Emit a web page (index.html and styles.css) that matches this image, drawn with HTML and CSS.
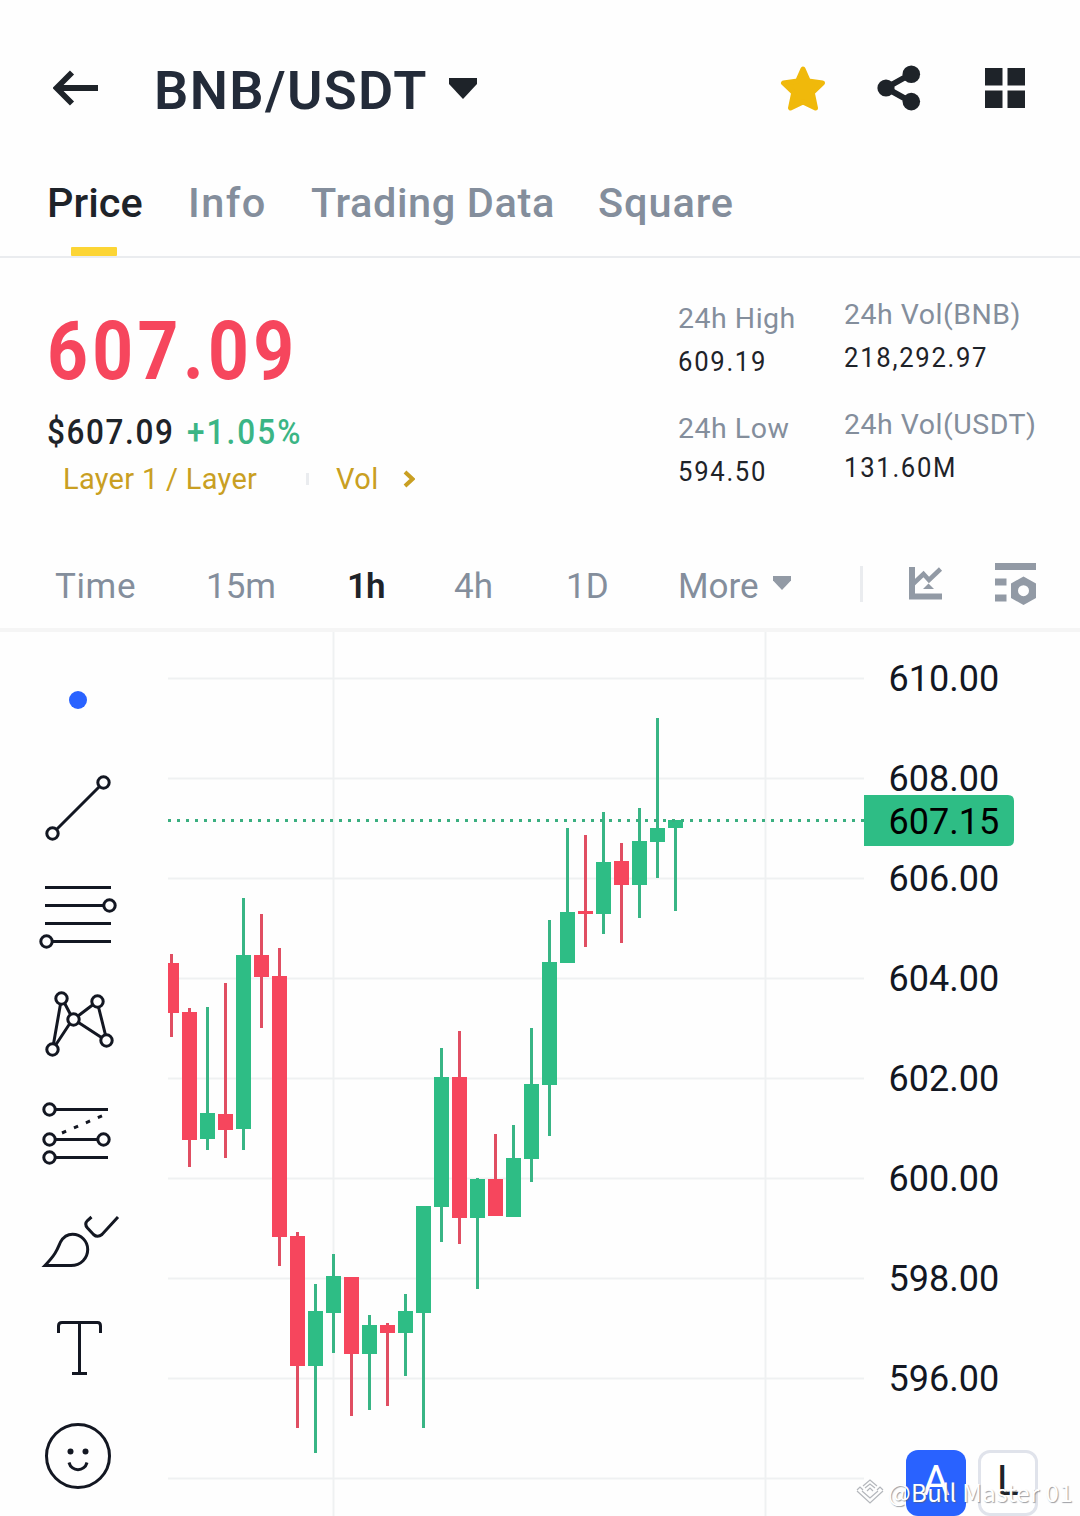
FILE: index.html
```html
<!DOCTYPE html>
<html lang="en">
<head>
  <meta charset="UTF-8" />
  <title>BNB/USDT</title>
  <link rel="stylesheet" href="styles.css">
</head>
<body>
  <header class="header">
    <svg class="back" width="46" height="36" viewBox="0 0 46 36"><path d="M19 2.5L3.500 18L19 33.500M4 18H45" fill="none" stroke="#1e2329" stroke-width="5.800"/></svg>
    <h1>BNB/USDT</h1>
    <svg class="caret" width="28" height="21" viewBox="0 0 28 21"><path d="M0 0H28V6L14 21L0 6Z" fill="#1e2329"/></svg>
    <div class="actions">
      <svg width="46" height="48" viewBox="0 0 46 48"><path d="M23 5L28.300 17L42.500 19L32.300 28.800L35.500 44L23 38L10.500 44L13.700 28.800L3.500 19L17.700 17Z" fill="#f0b90b" stroke="#f0b90b" stroke-width="5" stroke-linejoin="round"/></svg>
      <svg width="44" height="46" viewBox="0 0 44 46"><path d="M34 9L9 23L34 36.800" fill="none" stroke="#1e2329" stroke-width="6"/><g fill="#1e2329"><circle cx="9" cy="23" r="8.600"/><circle cx="34.300" cy="9.200" r="8.800"/><circle cx="34.300" cy="36.600" r="8.800"/></g></svg>
      <svg width="40" height="40" viewBox="0 0 40 40"><path d="M0 0H17.500V17.500H0ZM22.500 0H40V17.500H22.500ZM0 22.500H17.500V40H0ZM22.500 22.500H40V40H22.500Z" fill="#1e2329"/></svg>
    </div>
  </header>

  <nav class="tabs">
    <a class="tab active t-price">Price</a>
    <a class="tab t-info">Info</a>
    <a class="tab t-data">Trading Data</a>
    <a class="tab t-square">Square</a>
  </nav>

  <section class="summary">
    <div class="quote">
      <div class="last">607.09</div>
      <div class="change"><span class="fiat">$607.09</span><span class="pct">+1.05%</span></div>
      <div class="tags">
        <span class="layer">Layer 1 / Layer</span>
        <i class="sep"></i>
        <span class="vol">Vol</span>
        <svg width="12" height="18" viewBox="0 0 12 18"><path d="M2 2L9.500 9L2 16" fill="none" stroke="#c99f22" stroke-width="4"/></svg>
      </div>
    </div>
    <div class="stats first">
      <div class="label">24h High</div>
      <div class="value">609.19</div>
      <div class="label">24h Low</div>
      <div class="value">594.50</div>
    </div>
    <div class="stats second">
      <div class="label">24h Vol(BNB)</div>
      <div class="value">218,292.97</div>
      <div class="label">24h Vol(USDT)</div>
      <div class="value">131.60M</div>
    </div>
  </section>

  <div class="intervals">
    <span class="wide">Time</span>
    <span>15m</span>
    <span class="active">1h</span>
    <span>4h</span>
    <span>1D</span>
    <span class="more">More <svg width="18" height="14" viewBox="0 0 18 14"><path d="M0 0H18V4.500L9 14L0 4.500Z" fill="#929aa5"/></svg></span>
    <i class="sep"></i>
    <svg width="34" height="34" viewBox="0 0 34 34"><path d="M3 0V29.500H33" fill="none" stroke="#929aa5" stroke-width="6"/><path d="M4 17L14.500 7L20 13L31.500 2" fill="none" stroke="#929aa5" stroke-width="4.500"/><path d="M14 22L19.500 16.500L25 22Z" fill="#929aa5"/></svg>
    <svg width="42" height="44" viewBox="0 0 42 44"><path d="M0 1H41V8H0ZM0 16.500H11.500V23.500H0ZM0 32.500H11.500V39.500H0Z" fill="#929aa5"/><path fill-rule="evenodd" d="M28.500 14.500L41 21.500V36L28.500 43L16 36V21.500ZM28.500 23.200A5.500 5.500 0 1 0 28.500 34.200A5.500 5.500 0 1 0 28.500 23.200Z" fill="#929aa5"/></svg>
  </div>

  <main class="board">
    <div class="tools">
      <svg viewBox="0 0 168 108"><circle cx="78" cy="54" r="9" fill="#2962ff" stroke="none"/></svg>
      <svg viewBox="0 0 168 108"><path d="M56.500 75.500L99.500 32.500"/><circle cx="52.500" cy="79.500" r="5.700"/><circle cx="103.500" cy="28.500" r="5.700"/></svg>
      <svg viewBox="0 0 168 108"><path d="M45 25.500H111M45 43.500H104M45 61.500H111M52 79.500H111"/><circle cx="109.500" cy="43.500" r="5.700"/><circle cx="46.500" cy="79.500" r="5.700"/></svg>
      <svg viewBox="0 0 168 108"><path d="M60.500 34L53.500 74M64.500 33L70.500 44.500M69.500 54L56 74.500M78 46L92.500 35M98.500 37L105.500 65M78.500 52.500L101.500 67.500"/><circle cx="61.500" cy="28.500" r="5.700"/><circle cx="97.500" cy="31.500" r="5.700"/><circle cx="73.500" cy="49.500" r="5.700"/><circle cx="52.500" cy="79.500" r="5.700"/><circle cx="106.500" cy="70.500" r="5.700"/></svg>
      <svg viewBox="0 0 168 108"><path d="M55 31.500H108M55 61.500H98M55 79.500H108"/><path d="M62 55L104 37" stroke-dasharray="4.500 8.500"/><circle cx="49.500" cy="31.500" r="5.700"/><circle cx="49.500" cy="61.500" r="5.700"/><circle cx="103.500" cy="61.500" r="5.700"/><circle cx="49.500" cy="79.500" r="5.700"/></svg>
      <svg viewBox="0 0 168 108"><path d="M91.500 31L87.500 34.500Q84 38 87.500 42L93.500 48.500Q97.500 52 102 48.500L118 31M45 79.500C56 68 57 64 60.500 56C64 50 68 48.300 72.500 48.300C81 48.300 87.700 55 87.700 63.500C87.700 72 81 79.500 71 79.500Z"/></svg>
      <svg viewBox="0 0 168 108"><path d="M58.500 39V32Q58.500 28.500 62 28.500H97.500Q100.500 28.500 100.500 32V39M79.500 28.500V79.500M72 79.500H87"/></svg>
      <svg viewBox="0 0 168 108"><circle cx="78" cy="54" r="31.500"/><g fill="#131722" stroke="none"><circle cx="70.500" cy="49.500" r="3"/><circle cx="85.500" cy="49.500" r="3"/></g><path d="M69 60.500C71.500 70 84.500 70 87 60.500"/></svg>
    </div>
    <svg class="chart" id="chart" width="912" height="884" viewBox="168 632 912 884"></svg>
    <div class="scale">
      <span class="auto">A</span>
      <span class="log">L</span>
    </div>
  </main>

  <div class="watermark">
    <svg width="28" height="26" viewBox="0 0 28 26"><g fill="none" stroke="#b4b7bc" stroke-width="1.200"><path d="M7 7L14 1L21 7M9 9L14 5L19 9M1 11L4 8L7 11M21 11L24 8L27 11M11 12L14 9L17 12M1 12L14 24L27 12M6 12L14 19L22 12"/></g></svg>
    <span>@Bull Master 01</span>
  </div>

  <script>
    const chart = document.getElementById("chart");

    // x, high, low, body top, body bottom, up?
    const candles = [
      [171.5, 954, 1037, 963, 1013, 0],
      [189.5, 1008, 1167, 1012, 1140, 0],
      [207.5, 1007, 1150, 1113, 1139, 1],
      [225.5, 983, 1158, 1114, 1130, 0],
      [243.5, 898, 1150, 955, 1129, 1],
      [261.5, 914, 1028, 955, 977, 0],
      [279.5, 948, 1266, 976, 1237, 0],
      [297.5, 1232, 1428, 1236, 1366, 0],
      [315.5, 1284, 1453, 1311, 1366, 1],
      [333.5, 1254, 1353, 1276, 1313, 1],
      [351.5, 1277, 1416, 1277, 1354, 0],
      [369.5, 1315, 1410, 1325, 1354, 1],
      [387.5, 1323, 1406, 1325, 1333, 0],
      [405.5, 1294, 1376, 1311, 1333, 1],
      [423.5, 1206, 1428, 1206, 1313, 1],
      [441.5, 1048, 1242, 1077, 1207, 1],
      [459.5, 1031, 1244, 1077, 1218, 0],
      [477.5, 1178, 1289, 1179, 1218, 1],
      [495.5, 1134, 1216, 1179, 1216, 0],
      [513.5, 1125, 1217, 1158, 1217, 1],
      [531.5, 1028, 1182, 1084, 1159, 1],
      [549.5, 920, 1136, 962, 1085, 1],
      [567.5, 828, 963, 912, 963, 1],
      [585.5, 835, 947, 911, 914, 0],
      [603.5, 812, 934, 862, 914, 1],
      [621.5, 843, 943, 861, 885, 0],
      [639.5, 808, 918, 841, 885, 1],
      [657.5, 718, 878, 828, 842, 1],
      [675.5, 820, 911, 820, 828, 1]
    ];

    let out = "";
    function rect(x, y, w, h, cls) {
      out += `<rect x="${x}" y="${y}" width="${w}" height="${h}" class="${cls}"/>`;
    }

    rect(332.5, 630, 2, 886, "grid");
    rect(764.5, 630, 2, 886, "grid");
    for (let i = 0; i < 9; i++) {
      const y = 678 + i * 100;
      rect(168, y - 0.5, 696, 2, "grid");
      if (i < 8) {
        out += `<text x="888.5" y="${y + 13}" class="tick">${610 - i * 2}.00</text>`;
      }
    }

    candles.forEach(([x, high, low, top, bottom, up]) => {
      const left = Math.max(168, x - 7.5);
      rect(x - 1.5, high, 3, low - high, up ? "wick-up" : "wick-down");
      rect(left, top, x + 7.5 - left, bottom - top, up ? "up" : "down");
    });

    out += '<path d="M168 820.500H864" class="last-line"/>';
    out += '<path d="M864 795H1008Q1014 795 1014 801V840Q1014 846 1008 846H864Z" class="up"/>';
    out += '<text x="888.5" y="834" class="tick now">607.15</text>';
    chart.innerHTML = out;
  </script>
</body>
</html>
```
FILE: styles.css
```css
:root {
  --text: #1e2329;
  --muted: #848e9c;
  --green: #2ebd85;
  --red: #f6465d;
  --gold: #c99f22;
  --line: #eaecef;
}

* {
  box-sizing: border-box;
}

body {
  margin: 0;
  width: 1080px;
  height: 1516px;
  overflow: hidden;
  position: relative;
  background: #fefefe;
  color: var(--text);
  font-family: Roboto, "Liberation Sans", sans-serif;
}

svg {
  display: block;
  flex: none;
}

.header {
  display: flex;
  align-items: flex-start;
  height: 160px;
  padding: 48px 55px 0 53px;
}

.back {
  margin-top: 22px;
}

h1 {
  width: 295px;
  margin: 0 0 0 55px;
  padding-top: 3px;
  font-size: 54px;
  line-height: 80px;
  font-weight: 600;
  letter-spacing: 1.4px;
  color: #232b39;
  white-space: nowrap;
}

.caret {
  margin-top: 30px;
}

.actions {
  display: flex;
  align-items: center;
  height: 80px;
  margin-left: auto;
}

.actions svg:nth-child(2) {
  margin: 0 64px 0 51px;
}

.tabs {
  display: flex;
  gap: 46px;
  height: 98px;
  padding-left: 47px;
  border-bottom: 2px solid var(--line);
}

.tab {
  display: flex;
  flex-direction: column;
  font-size: 41.5px;
  line-height: 85px;
  font-weight: 500;
  color: var(--muted);
  white-space: nowrap;
}

.tab.active {
  color: var(--text);
}

.tab.active::after {
  content: "";
  width: 46px;
  height: 9px;
  margin: 2px 0 0 23.5px;
  border-radius: 1px;
  background: #fcd535;
}

.t-price { width: 95px; }
.t-info { width: 77px; letter-spacing: 1.4px; }
.t-data { width: 241px; letter-spacing: 0.6px; }
.t-square { width: 136px; letter-spacing: 0.9px; }

.summary {
  display: flex;
  height: 282px;
}

.quote {
  width: 678px;
  padding: 42px 0 0 47px;
}

/* figures are set narrow with open tracking */
.last,
.fiat,
.pct,
.value {
  transform-origin: left;
}

.last {
  font-size: 81px;
  line-height: 104px;
  font-weight: 700;
  letter-spacing: 5px;
  color: var(--red);
  transform: scaleX(0.88);
}

.change {
  display: flex;
  font-size: 35px;
  line-height: 58px;
  height: 56px;
  font-weight: 500;
}

.fiat {
  width: 140px;
  letter-spacing: 1.8px;
  transform: scaleX(0.9);
}

.pct {
  color: #3bb585;
  letter-spacing: 2.3px;
  transform: scaleX(0.9);
}

.tags {
  display: flex;
  align-items: center;
  padding-left: 16px;
  font-size: 29px;
  line-height: 38px;
  color: var(--gold);
}

.layer {
  width: 243px;
  letter-spacing: 0.3px;
}

.sep {
  width: 3px;
  background: var(--line);
}

.tags .sep {
  height: 12px;
}

.vol {
  width: 67px;
  margin-left: 27px;
  letter-spacing: 0.4px;
}

.stats {
  font-size: 28.5px;
  line-height: 43px;
  white-space: nowrap;
}

.stats.first {
  width: 166px;
  padding-top: 39px;
}

.stats.second {
  padding-top: 35px;
}

.label {
  color: var(--muted);
  letter-spacing: 0.5px;
}

.value {
  margin-bottom: 24px;
  letter-spacing: 1.9px;
  transform: scaleX(0.9);
}

.intervals {
  display: grid;
  grid-template-columns: 151px 141px 107px 112px 112px 182px 48px 86px 42px;
  align-items: center;
  height: 92px;
  padding-left: 55px;
  border-bottom: 4px solid #f5f5f5;
  font-size: 35px;
  line-height: 90px;
  color: var(--muted);
}

.intervals span {
  padding-top: 2px;
}

.intervals .wide {
  letter-spacing: 0.6px;
}

.intervals .active {
  color: var(--text);
  font-weight: 600;
  letter-spacing: -1px;
}

.more {
  display: flex;
  align-items: center;
  gap: 14px;
}

.more svg {
  margin-top: -8px;
}

.intervals .sep {
  height: 36px;
  margin-top: -4px;
}

.intervals > svg {
  margin: -5px 0 0 1px;
}

.board {
  position: relative;
  display: flex;
  height: 884px;
}

.tools {
  width: 168px;
  padding-top: 14px;
}

.tools svg {
  width: 168px;
  height: 108px;
  fill: none;
  stroke: #131722;
  stroke-width: 3;
}

.chart .grid { fill: #eff1f2; }
.chart .up { fill: var(--green); }
.chart .down { fill: var(--red); }
.chart .wick-up { fill: #38b585; }
.chart .wick-down { fill: #e04e62; }

.last-line {
  fill: none;
  stroke: #3aaf80;
  stroke-width: 3;
  stroke-dasharray: 3 6;
}

.tick {
  font-size: 36px;
  fill: #131722;
}

.tick.now {
  fill: #000;
}

/* auto / log switches sit over the price axis */
.scale {
  position: absolute;
  right: 42px;
  bottom: 0;
  display: flex;
  gap: 12px;
}

.scale span {
  width: 60px;
  height: 66px;
  border-radius: 12px;
  font-size: 42px;
  line-height: 62px;
  text-align: center;
}

.scale .auto {
  background: #2962ff;
  color: #fff;
}

.scale .log {
  border: 3px solid #e0e3eb;
  background: #fff;
  line-height: 56px;
}

.watermark {
  position: absolute;
  right: 7px;
  bottom: 6px;
  display: flex;
  align-items: center;
  gap: 4px;
  font-family: "Noto Sans CJK SC", "Noto Sans", sans-serif;
  font-size: 24px;
  line-height: 36px;
  letter-spacing: 0.4px;
  color: #fff;
  text-shadow: 1px 1px 1px rgba(90, 94, 102, 0.6);
  white-space: nowrap;
}
```
